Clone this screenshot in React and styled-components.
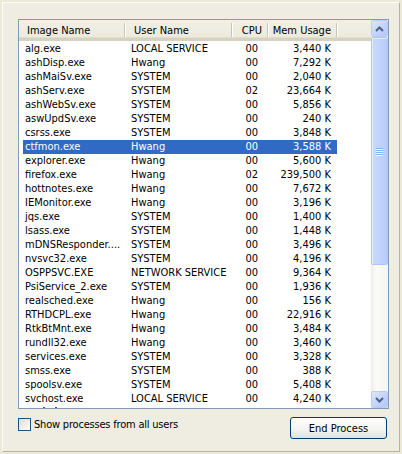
import styled, { createGlobalStyle } from "styled-components";

const GlobalStyle = createGlobalStyle`
  html, body {
    margin: 0;
    padding: 0;
    background: #ece9d8;
  }
  body {
    font-family: "DejaVu Sans Condensed", "Liberation Sans", sans-serif;
    font-size: 11px;
    color: #000;
  }
`;

const processes = [
  ["alg.exe", "LOCAL SERVICE", "00", "3,440 K"],
  ["ashDisp.exe", "Hwang", "00", "7,292 K"],
  ["ashMaiSv.exe", "SYSTEM", "00", "2,040 K"],
  ["ashServ.exe", "SYSTEM", "02", "23,664 K"],
  ["ashWebSv.exe", "SYSTEM", "00", "5,856 K"],
  ["aswUpdSv.exe", "SYSTEM", "00", "240 K"],
  ["csrss.exe", "SYSTEM", "00", "3,848 K"],
  ["ctfmon.exe", "Hwang", "00", "3,588 K"],
  ["explorer.exe", "Hwang", "00", "5,600 K"],
  ["firefox.exe", "Hwang", "02", "239,500 K"],
  ["hottnotes.exe", "Hwang", "00", "7,672 K"],
  ["IEMonitor.exe", "Hwang", "00", "3,196 K"],
  ["jqs.exe", "SYSTEM", "00", "1,400 K"],
  ["lsass.exe", "SYSTEM", "00", "1,448 K"],
  ["mDNSResponder....", "SYSTEM", "00", "3,496 K"],
  ["nvsvc32.exe", "SYSTEM", "00", "4,196 K"],
  ["OSPPSVC.EXE", "NETWORK SERVICE", "00", "9,364 K"],
  ["PsiService_2.exe", "SYSTEM", "00", "1,936 K"],
  ["realsched.exe", "Hwang", "00", "156 K"],
  ["RTHDCPL.exe", "Hwang", "00", "22,916 K"],
  ["RtkBtMnt.exe", "Hwang", "00", "3,484 K"],
  ["rundll32.exe", "Hwang", "00", "3,460 K"],
  ["services.exe", "SYSTEM", "00", "3,328 K"],
  ["smss.exe", "SYSTEM", "00", "388 K"],
  ["spoolsv.exe", "SYSTEM", "00", "5,408 K"],
  ["svchost.exe", "LOCAL SERVICE", "00", "4,240 K"],
];

const SELECTED = 7;

const Page = styled.div`
  width: 402px;
  height: 454px;
  box-sizing: border-box;
  padding: 2px;
  background: #ece9d8;
`;

const TabPage = styled.div`
  height: 100%;
  box-sizing: border-box;
  border: 1px solid;
  border-color: #fcfcf9 #b5b2a3 #b5b2a3 #fcfcf9;
  background: #efede2;
  padding: 16px 10px 0 15px;
  display: flex;
  flex-direction: column;
`;

const ListBox = styled.div`
  height: 390px;
  box-sizing: border-box;
  border: 1px solid #7f9db9;
  background: #fff;
  display: flex;
  overflow: hidden;
`;

const ListArea = styled.div`
  flex: 1;
  display: flex;
  flex-direction: column;
  overflow: hidden;
`;

const HeaderRow = styled.div`
  height: 21px;
  box-sizing: border-box;
  display: flex;
  background: linear-gradient(#f1f0e8, #ebeadb);
  border-bottom: 3px solid #d6d2c2;
  box-shadow: inset 0 -1px 0 #e2decd;
  flex-shrink: 0;
`;

const HeaderCell = styled.div`
  width: ${(p) => p.$w}px;
  box-sizing: border-box;
  padding: 3px ${(p) => p.$pr || 0}px 0 ${(p) => p.$pl || 0}px;
  text-align: ${(p) => p.$align || "left"};
  line-height: 15px;
  position: relative;
  white-space: nowrap;
  &::after {
    content: "";
    position: absolute;
    right: 0;
    top: 3px;
    bottom: 1px;
    width: 1px;
    background: #c7c5b2;
    box-shadow: 1px 0 0 #fff;
  }
`;

const Rows = styled.div`
  flex: 1;
  overflow: hidden;
  padding-top: 1px;
`;

const Row = styled.div`
  display: flex;
  margin-left: 4px;
  width: 314px;
  height: 14px;
  line-height: 14px;
  background: ${(p) => (p.$selected ? "#316ac5" : "transparent")};
  color: ${(p) => (p.$selected ? "#fff" : "#000")};
`;

const Cell = styled.div`
  width: ${(p) => p.$w}px;
  box-sizing: border-box;
  padding: 0 ${(p) => p.$pr || 0}px 0 ${(p) => p.$pl || 0}px;
  text-align: ${(p) => p.$align || "left"};
  white-space: nowrap;
  overflow: hidden;
`;

/* tops of the next, mostly hidden row */
const PeekRow = styled.div`
  height: 2px;
  display: flex;
  gap: 10px;
  padding: 1px 0 0 24px;
  span {
    width: 2px;
    height: 2px;
    background: #555;
  }
`;

const ScrollBar = styled.div`
  width: 17px;
  flex-shrink: 0;
  display: flex;
  flex-direction: column;
  background: linear-gradient(90deg, #eeede5, #fbfbf7 30%, #f6f5ef);
`;

const ArrowButton = styled.div`
  height: 17px;
  box-sizing: border-box;
  border: 1px solid #fff;
  border-radius: 2px;
  background: linear-gradient(135deg, #dce6fd, #c1d2fb 60%, #b4c7f5);
  display: flex;
  align-items: center;
  justify-content: center;
  outline: 1px solid #b9cbf3;
  outline-offset: -1px;
`;

const Track = styled.div`
  flex: 1;
  display: flex;
  flex-direction: column;
`;

const Thumb = styled.div`
  height: 228px;
  box-sizing: border-box;
  border: 1px solid #b1c5f5;
  border-radius: 2px;
  background: linear-gradient(90deg, #cad9fd, #c1d2fb 50%, #b8cbf7);
  box-shadow: inset 1px 1px 0 #e6edfd;
  display: flex;
  align-items: center;
  justify-content: center;
`;

const Grip = styled.div`
  width: 7px;
  display: flex;
  flex-direction: column;
  gap: 1px;
  span {
    height: 1px;
    background: #8cb0f8;
    box-shadow: 0 1px 0 #eef4fe;
  }
`;

const Footer = styled.div`
  display: flex;
  align-items: flex-start;
  justify-content: space-between;
  margin-top: 8px;
  padding-right: 2px;
`;

const CheckLabel = styled.label`
  display: flex;
  align-items: center;
  gap: 3px;
  margin-top: 1px;
  line-height: 13px;
  letter-spacing: -0.2px;
`;

const CheckBox = styled.span`
  width: 13px;
  height: 13px;
  box-sizing: border-box;
  border: 1px solid #1c5180;
  background: linear-gradient(135deg, #dcdcd7, #fff);
`;

const Button = styled.button`
  width: 97px;
  height: 22px;
  box-sizing: border-box;
  border: 1px solid #003c74;
  border-radius: 3px;
  background: linear-gradient(#ffffff, #f3f3ef 60%, #e3e2da);
  font: inherit;
  color: #000;
  padding: 0;
`;

const cols = [
  { w: 106, label: "Image Name", hpl: 8 },
  { w: 107, label: "User Name", hpl: 9 },
  { w: 36, label: "CPU", align: "right", hpr: 6 },
  { w: 69, label: "Mem Usage", align: "right", hpr: 6 },
];

function Arrow({ up }) {
  return (
    <svg width="9" height="6" viewBox="0 0 9 6">
      <polyline
        points={up ? "1,5 4.5,1.5 8,5" : "1,1 4.5,4.5 8,1"}
        fill="none"
        stroke="#4d6185"
        strokeWidth="2"
      />
    </svg>
  );
}

function App() {
  return (
    <Page>
      <GlobalStyle />
      <TabPage>
        <ListBox>
          <ListArea>
            <HeaderRow>
              {cols.map((c) => (
                <HeaderCell
                  key={c.label}
                  $w={c.w}
                  $pl={c.hpl}
                  $pr={c.hpr}
                  $align={c.align}
                >
                  {c.label}
                </HeaderCell>
              ))}
            </HeaderRow>
            <Rows>
              {processes.map((p, i) => (
                <Row key={i} $selected={i === SELECTED}>
                  <Cell $w={102} $pl={2}>
                    {p[0]}
                  </Cell>
                  <Cell $w={107} $pl={6}>
                    {p[1]}
                  </Cell>
                  <Cell $w={36} $align="right" $pr={10}>
                    {p[2]}
                  </Cell>
                  <Cell $w={69} $align="right" $pr={6}>
                    {p[3]}
                  </Cell>
                </Row>
              ))}
              <PeekRow>
                <span />
                <span />
              </PeekRow>
            </Rows>
          </ListArea>
          <ScrollBar>
            <ArrowButton>
              <Arrow up />
            </ArrowButton>
            <Track>
              <Thumb>
                <Grip>
                  <span />
                  <span />
                  <span />
                  <span />
                </Grip>
              </Thumb>
            </Track>
            <ArrowButton>
              <Arrow />
            </ArrowButton>
          </ScrollBar>
        </ListBox>
        <Footer>
          <CheckLabel>
            <CheckBox />
            Show processes from all users
          </CheckLabel>
          <Button>End Process</Button>
        </Footer>
      </TabPage>
    </Page>
  );
}

export default App;
